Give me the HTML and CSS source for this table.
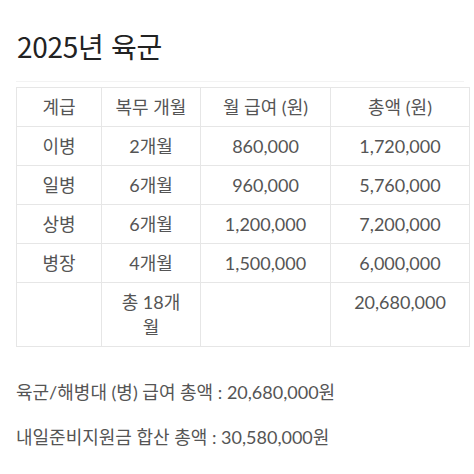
FILE: index.html
```html
<!DOCTYPE html>
<html lang="ko">
<head>
<meta charset="utf-8">
<link rel="stylesheet" href="styles.css">
</head>
<body>
<div class="page">
  <h2 class="title">2025년 육군</h2>
  <div class="rule"></div>
  <table class="pay">
    <colgroup>
      <col class="c1"><col class="c2"><col class="c3"><col class="c4">
    </colgroup>
    <tr><td>계급</td><td>복무 개월</td><td>월 급여 (원)</td><td>총액 (원)</td></tr>
    <tr><td>이병</td><td>2개월</td><td>860,000</td><td>1,720,000</td></tr>
    <tr><td>일병</td><td>6개월</td><td>960,000</td><td>5,760,000</td></tr>
    <tr><td>상병</td><td>6개월</td><td>1,200,000</td><td>7,200,000</td></tr>
    <tr><td>병장</td><td>4개월</td><td>1,500,000</td><td>6,000,000</td></tr>
    <tr class="total"><td></td><td>총 18개월</td><td></td><td>20,680,000</td></tr>
  </table>
  <p class="note">육군/해병대 (병) 급여 총액 : 20,680,000원</p>
  <p class="note">내일준비지원금 합산 총액 : 30,580,000원</p>
</div>
</body>
</html>
```

FILE: styles.css
```css
html, body {
  margin: 0;
  padding: 0;
  background: #ffffff;
}
.page {
  padding: 0 5px 0 16px;
  font-family: Lato, "Noto Sans CJK KR", sans-serif;
  color: #555555;
}
.title {
  margin: 27px 0 0 1px;
  font-family: "Noto Sans CJK KR", sans-serif;
  font-weight: 400;
  font-size: 28px;
  line-height: 39px;
  color: #222222;
  letter-spacing: -0.3px;
}
.rule {
  margin-top: 15px;
  width: 448px;
  height: 1px;
  background: #f3f3f3;
}
.pay {
  margin-top: 5px;
  width: 453px;
  border-collapse: collapse;
  table-layout: fixed;
  font-size: 18px;
}
.c1 { width: 85px; }
.c2 { width: 99px; }
.c3 { width: 130px; }
.c4 { width: 139px; }
.pay td {
  border: 1px solid #e6e6e6;
  padding: 7px 12px 6px;
  line-height: 25px;
  text-align: center;
  vertical-align: top;
  color: #555555;
}
.note {
  margin: 0;
  font-size: 18px;
  line-height: 26px;
  color: #555555;
}
.pay + .note {
  margin-top: 32px;
}
.note + .note {
  margin-top: 19px;
}
```
